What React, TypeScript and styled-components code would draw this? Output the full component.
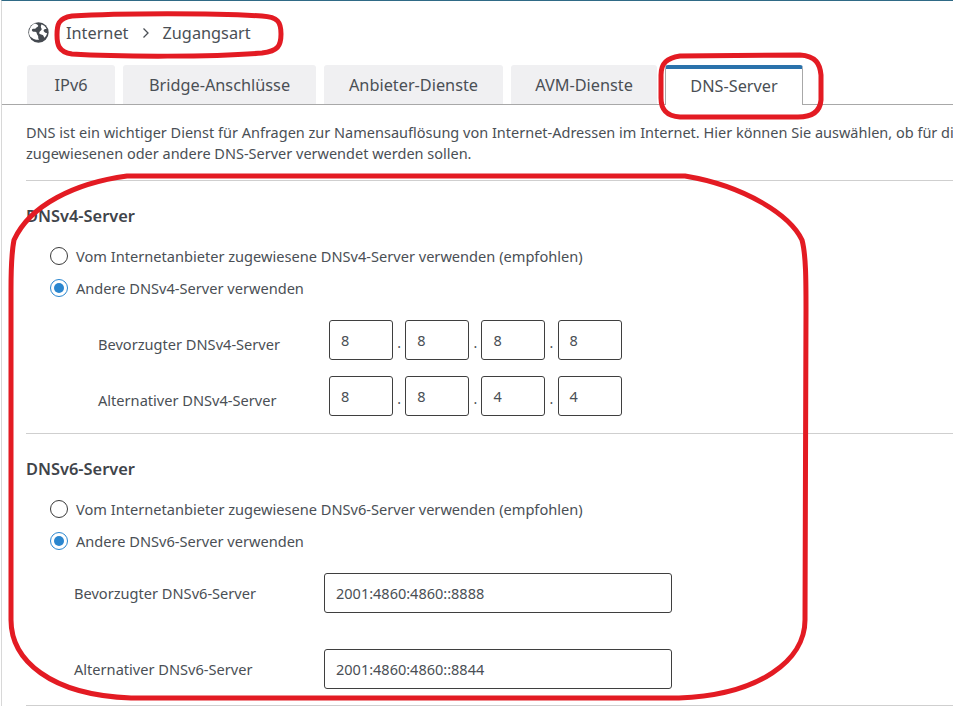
import React from 'react';
import styled, { createGlobalStyle } from 'styled-components';

const GlobalStyle = createGlobalStyle`
  html, body {
    margin: 0;
    padding: 0;
    background: #fff;
    overflow: hidden;
  }
  body {
    font-family: "Noto Sans", "Open Sans", sans-serif;
    color: #444950;
  }
`;

const Page = styled.div`
  position: relative;
  width: 952px;
  height: 706px;
  box-sizing: border-box;
  border-top: 1px solid #2f6a86;
  border-left: 1px solid #d8d8d8;
  margin-left: 1px;
  overflow: hidden;
`;

const Breadcrumb = styled.div`
  display: flex;
  align-items: center;
  height: 64px;
  padding: 0 0 0 25px;
  box-sizing: border-box;
  font-size: 16.3px;
  color: #4a4f55;
`;

const GlobeIcon = styled.svg`
  width: 23px;
  height: 23px;
  margin-right: 16px;
  margin-top: -2px;
`;

const Crumb = styled.span``;

const CrumbArrow = styled.svg`
  width: 10px;
  height: 12px;
  margin: 0 12px 0 12px;
`;

const TabBar = styled.div`
  display: flex;
  gap: 8px;
  height: 39px;
  padding-left: 25px;
  border-bottom: 1px solid #a8a8a8;
`;

const Tab = styled.div<{ $width: number; $active?: boolean }>`
  width: ${p => p.$width}px;
  height: ${p => (p.$active ? 40 : 39)}px;
  box-sizing: border-box;
  display: flex;
  align-items: center;
  justify-content: center;
  font-size: 16.3px;
  color: #4a4f55;
  border-radius: 3px 3px 0 0;
  background: ${p => (p.$active ? '#fff' : '#f0f0f2')};
  ${p => p.$active && `
    border-top: 4px solid #2a72ab;
    border-left: 1px solid #a8a8a8;
    border-right: 1px solid #a8a8a8;
    padding-bottom: 2px;
  `}
`;

const Content = styled.div`
  padding-left: 24px;
`;

const Intro = styled.p`
  margin: 0;
  padding-top: 17px;
  width: 960px;
  font-size: 14.5px;
  line-height: 21px;
  color: #4a4f55;
  white-space: nowrap;
`;

const Section = styled.section`
  border-top: 1px solid #cfcfcf;
`;

const FirstSection = styled(Section)`
  margin-top: 16px;
`;

const SectionTitle = styled.h3`
  margin: 0;
  height: 22px;
  padding-top: 24px;
  font-size: 16.4px;
  line-height: 22px;
  font-weight: 600;
  color: #3f444a;
`;

const RadioGroup = styled.div`
  display: flex;
  flex-direction: column;
  gap: 12px;
  padding: 19px 0 0 24px;
`;

const RadioRow = styled.label`
  display: flex;
  align-items: center;
  height: 20px;
  gap: 8px;
  font-size: 14.6px;
  color: #4a4f55;
`;

const RadioMark = styled.span<{ $checked?: boolean }>`
  width: 18px;
  height: 18px;
  box-sizing: border-box;
  border-radius: 50%;
  flex: none;
  border: ${p => (p.$checked ? '1.5px solid #2a86cf' : '1.5px solid #3a3a3a')};
  display: flex;
  align-items: center;
  justify-content: center;
  &::after {
    content: '';
    display: ${p => (p.$checked ? 'block' : 'none')};
    width: 10px;
    height: 10px;
    border-radius: 50%;
    background: #2a86cf;
  }
`;

const Fields4 = styled.div`
  display: flex;
  flex-direction: column;
  gap: 16px;
  padding: 22px 0 17px 72px;
`;

const FieldRow = styled.div`
  display: flex;
  align-items: center;
`;

const FieldLabel = styled.span<{ $width: number }>`
  width: ${p => p.$width}px;
  flex: none;
  font-size: 14.6px;
  color: #4a4f55;
  padding-top: 8px;
`;

const Octets = styled.div`
  display: flex;
  align-items: center;
`;

const Octet = styled.div`
  width: 64px;
  height: 40px;
  box-sizing: border-box;
  border: 1px solid #3f3f3f;
  border-radius: 3px;
  padding: 0 0 1px 11px;
  display: flex;
  align-items: center;
  font-size: 14.5px;
  color: #4a4f55;
`;

const Dot = styled.span`
  width: 12.2px;
  text-align: center;
  font-size: 14px;
  line-height: 14px;
  padding-top: 6px;
  color: #4a4f55;
`;

const Fields6 = styled.div`
  display: flex;
  flex-direction: column;
  gap: 36px;
  padding: 22px 0 0 48px;
`;

const Field6Label = styled(FieldLabel)`
  padding-top: 0;
`;

const WideInput = styled.div`
  width: 348px;
  height: 40px;
  box-sizing: border-box;
  border: 1px solid #3f3f3f;
  border-radius: 3px;
  padding-left: 11px;
  display: flex;
  align-items: center;
  font-size: 14.5px;
  color: #4a4f55;
`;

const BottomRule = styled.div`
  margin-top: 16px;
  border-top: 1px solid #cfcfcf;
`;

const Annotations = styled.svg`
  position: absolute;
  left: -2px;
  top: -1px;
  width: 953px;
  height: 706px;
  pointer-events: none;
`;

const ipv4 = [
  { label: 'Bevorzugter DNSv4-Server', octets: ['8', '8', '8', '8'] },
  { label: 'Alternativer DNSv4-Server', octets: ['8', '8', '4', '4'] },
];

const ipv6 = [
  { label: 'Bevorzugter DNSv6-Server', value: '2001:4860:4860::8888' },
  { label: 'Alternativer DNSv6-Server', value: '2001:4860:4860::8844' },
];

const tabs = [
  { name: 'IPv6', width: 88 },
  { name: 'Bridge-Anschlüsse', width: 193 },
  { name: 'Anbieter-Dienste', width: 179 },
  { name: 'AVM-Dienste', width: 146 },
];

function App() {
  return (
    <Page>
      <GlobalStyle />
      <Breadcrumb>
        <GlobeIcon viewBox="0 0 24 24">
          <circle cx="12" cy="12" r="10.6" fill="#454a50" />
          <path
            d="M8 2.6c1.6.4 3 1 3.6 2 .5.9-.6 1.5-1.4 2-.9.6-1 1.4-2 1.5-1 .2-2-.2-2.8.6-.6.7-.2 1.8.6 2.2 1 .5 2.4 0 3.4.6 1 .7.6 2 1.4 2.9.5.6 1 1.400.9 2.300-.1 1.100.300 2.300 1 2.800-2.600.500-5.500-.2-7.500-2C2.600 16.500 1.700 13.500 2.300 10.500 2.800 7 5 4 8 2.600zM15 3.300c1 .5 2 .9 3 1.700 1 .800 1.900 2 2.400 3.200-1 .300-2 .200-2.700.900-.8.800-.1 1.800.5 2.500.7.800 1.800 1 2.700.8-.3 2-1.300 3.800-2.800 5.100-.6-1-.7-2.200-1.700-2.900-.9-.600-2.200-.300-3-1-.7-.600-.7-1.700-.2-2.500.5-.900 1.600-1.100 2-2 .4-1-.6-1.800-.7-2.800-.1-1 .100-1.800.5-2z"
            fill="#fff"
          />
        </GlobeIcon>
        <Crumb>Internet</Crumb>
        <CrumbArrow viewBox="0 0 10 12">
          <path d="M2.500 1.500L7 6l-4.500 4.500" fill="none" stroke="#4a4f55" strokeWidth="1.300" />
        </CrumbArrow>
        <Crumb>Zugangsart</Crumb>
      </Breadcrumb>

      <TabBar>
        {tabs.map(tab => (
          <Tab key={tab.name} $width={tab.width}>{tab.name}</Tab>
        ))}
        <Tab $width={138} $active>DNS-Server</Tab>
      </TabBar>

      <Content>
        <Intro>
          DNS ist ein wichtiger Dienst für Anfragen zur Namensauflösung von Internet-Adressen im Internet. Hier können Sie auswählen, ob für die
          <br />
          zugewiesenen oder andere DNS-Server verwendet werden sollen.
        </Intro>

        <FirstSection>
          <SectionTitle>DNSv4-Server</SectionTitle>
          <RadioGroup>
            <RadioRow><RadioMark />Vom Internetanbieter zugewiesene DNSv4-Server verwenden (empfohlen)</RadioRow>
            <RadioRow><RadioMark $checked />Andere DNSv4-Server verwenden</RadioRow>
          </RadioGroup>
          <Fields4>
            {ipv4.map(row => (
              <FieldRow key={row.label}>
                <FieldLabel $width={231}>{row.label}</FieldLabel>
                <Octets>
                  {row.octets.map((octet, i) => (
                    <React.Fragment key={i}>
                      {i > 0 && <Dot>.</Dot>}
                      <Octet>{octet}</Octet>
                    </React.Fragment>
                  ))}
                </Octets>
              </FieldRow>
            ))}
          </Fields4>
        </FirstSection>

        <Section>
          <SectionTitle>DNSv6-Server</SectionTitle>
          <RadioGroup>
            <RadioRow><RadioMark />Vom Internetanbieter zugewiesene DNSv6-Server verwenden (empfohlen)</RadioRow>
            <RadioRow><RadioMark $checked />Andere DNSv6-Server verwenden</RadioRow>
          </RadioGroup>
          <Fields6>
            {ipv6.map(row => (
              <FieldRow key={row.label}>
                <Field6Label $width={250}>{row.label}</Field6Label>
                <WideInput>{row.value}</WideInput>
              </FieldRow>
            ))}
          </Fields6>
          <BottomRule />
        </Section>
      </Content>

      <Annotations viewBox="0 0 953 706">
        <g fill="none" stroke="#e31b23" strokeWidth="5" strokeLinejoin="round" strokeLinecap="round">
          <path d="M72 16C120 13 215 13 262 16C278 17 281 22 281 34C281 46 278 51 262 53C215 57 120 57 72 54C58 52 57 44 57 35C57 25 58 18 72 16Z" />
          <path d="M680 56L800 55C816 56 820 64 821 75L821 100C820 112 812 117 798 117L680 117C665 116 661 108 661 98L661 75C661 63 667 58 680 56Z" />
          <path d="M127 176L685 176C745 186 790 215 802 240C806 255 806 280 806 310L805 620C805 660 760 695 679 698L131 698C50 695 11 660 11 620L11 290C11 262 12 250 14 240C30 205 75 183 127 176Z" />
        </g>
      </Annotations>
    </Page>
  );
}

export default App;
